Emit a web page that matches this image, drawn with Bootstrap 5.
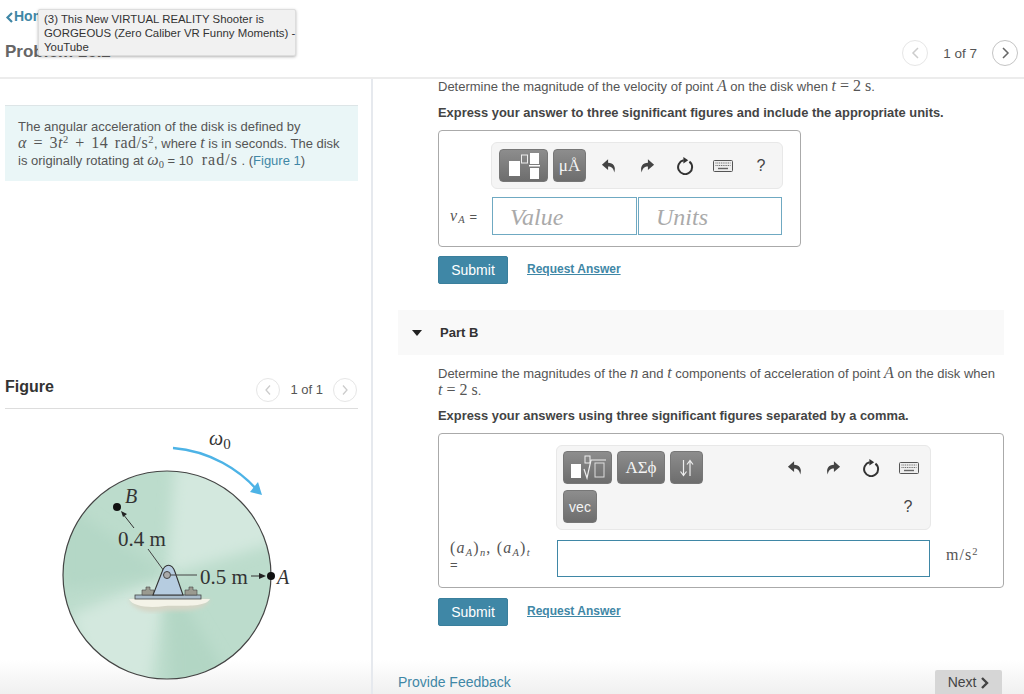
<!DOCTYPE html>
<html lang="en">
<head>
  <meta charset="UTF-8">
  <title>Problem 16.2</title>
  <link href="https://cdn.jsdelivr.net/npm/bootstrap@5.3.0/dist/css/bootstrap.min.css" rel="stylesheet">
  <style>
    html, body { height: 694px; overflow: hidden; }
    body {
      font: 13px/16px "Liberation Sans", Arial, sans-serif;
      color: #555;
      background: linear-gradient(to bottom, #fff 660px, #f0f0f0 694px);
    }
    a { color: #3f87a6; text-decoration: none; }
    .mj { font-family: "Liberation Serif", serif; font-size: 16px; line-height: 1; }
    .mj i { font-style: italic; }
    .mj sup, .mj sub { font-size: 10.5px; line-height: 0; }
    .mj-wide { word-spacing: 2px; letter-spacing: .5px; }
    .mj-rad { letter-spacing: 1px; }
    .mj-label { letter-spacing: 1.2px; }

    .top-bar { height: 79px; border-bottom: 2px solid #ececec; }
    .home-link { left: 5px; top: 8px; font-size: 14px; font-weight: 700; }
    .prob-title { left: 5px; top: 44px; font-size: 17px; font-weight: 700; color: #666; }
    .tab-tip {
      left: 38px; top: 9px; width: 258px; height: 47px; padding: 2px 5px;
      font-size: 11.4px; line-height: 14px; color: #333; background: #f1f1f1; white-space: nowrap;
      border: 1px solid #ddd; border-radius: 2px; box-shadow: 0 1px 3px rgba(0,0,0,.3);
    }
    .pager-top { padding: 40px 6px 0 0; color: #555; font-size: 13.5px; gap: 15px; }
    .pager-top .pg-count { margin-top: 6px; }
    .round-btn {
      width: 26px; height: 26px; border-radius: 50%; border: 1px solid #e6e6e6;
      display: flex; align-items: center; justify-content: center; background: #fff;
    }
    .round-btn.on { border-color: #c4c4c4; }

    .left-pane { width: 373px; height: 615px; border-right: 2px solid #e6e9ee; flex: none; padding: 26px 13px 0 5px; }
    .info-box { height: 76px; padding: 13px; background: #eaf6f7; border-top: 1px solid #dde5e7; }
    .figure-head { margin-top: 193px; height: 35px; border-bottom: 1px solid #ddd; padding-bottom: 3px; }
    .figure-name { font-size: 16px; font-weight: 700; color: #333; line-height: 18px; margin-top: -6px; }
    .pager-fig { gap: 10px; font-size: 13px; margin-right: 1px; }
    .pager-fig .round-btn { width: 24px; height: 24px; }
    .disk-art { display: block; margin: 11px 0 0 -5px; }

    .right-pane { flex: 1; padding: 0 20px 0 25px; }
    .part-body { padding-left: 40px; }
    .q-first { margin-top: -1px; }
    .strong-line { font-size: 12.9px; font-weight: 700; color: #444; margin-top: 10px; }
    .strong-b { margin-top: 9px; }

    .answer-box { border: 1px solid #aaa; border-radius: 4px; padding: 11px 18px 11px 11px; }
    .box-a { width: 363px; margin-top: 9px; height: 117px; }
    .box-b { width: 566px; margin-top: 9px; height: 155px; padding-right: 18px; }
    .tool-tray { background: #f5f5f5; border: 1px solid #e8e8e8; border-radius: 6px; }
    .tray-a { height: 47px; margin-left: 41px; width: 292px; padding: 6px 0 6px 7px; }
    .tray-b { width: 375px; height: 85px; margin-left: 106px; padding: 5px 6px; }
    .tool-btn {
      height: 33px; border-radius: 4px; border: 1px solid #777; color: #f4f4f4; flex: none;
      background: linear-gradient(to bottom, #8d8d8d, #6d6d6d);
      display: flex; align-items: center; justify-content: center; padding: 0;
      font: 17px/1 "Liberation Serif", serif;
    }
    .tool-btn + .tool-btn { margin-left: 5px; }
    .btn-tmpl { width: 49px; }
    .btn-unit { width: 33px; }
    .btn-greek { width: 48px; }
    .btn-vec { width: 34px; font: 14px "Liberation Sans", sans-serif; }
    .tool-set-a { margin-left: 4px; flex: none; }
    .tool-set-b { margin-left: 73px; flex: none; }
    .vec-row { margin-top: 6px; }
    .help-b { margin-right: -3px; }
    .tool-ic { width: 38px; flex: none; display: flex; align-items: center; justify-content: center; color: #444; font-size: 16px; }
    .math-label { width: 42px; flex: none; white-space: nowrap; }
    .math-label-b { width: 107px; }
    .ans-row-b { margin-top: 10px; }
    .ans-input { height: 38px; border: 1.5px solid #6fa9c2; background: #fff; font: italic 24px/38px "Liberation Serif", serif; color: #aaa; padding-left: 17px; }
    .ans-value { width: 145px; }
    .ans-units { width: 144px; }
    .ans-wide { width: 373px; height: 37px; border-color: #3f87a6; }
    .unit-tail { margin: 7px 0 0 16px; letter-spacing: 1px; }
    .submit-btn {
      width: 70px; height: 28px; background: #3f87a6; color: #fff; border: 1px solid #3a7f9c;
      border-radius: 2px; font-size: 14px; padding: 0; line-height: 26px;
    }
    .req-link { font-size: 12px; font-weight: 700; text-decoration: underline; margin: 0 0 2px 19px; }
    .submit-row { margin-top: 9px; }
    .submit-row-b { margin-top: 10px; }
    .part-bar { height: 45px; margin-top: 26px; background: #f9f9f9; color: #333; font-weight: 700; padding-left: 14px; }
    .caret-down { width: 0; height: 0; border: 5px solid transparent; border-top: 6px solid #222; border-bottom: 0; margin-right: 18px; }
    .part-q { margin-top: 10px; }
    .foot-row { margin-top: 44px; height: 24px; }
    .foot-row a { font-size: 14px; }
    .next-btn {
      width: 67px; height: 24px; margin-right: 2px; background: #d6d6d6; border: 0; border-radius: 2px 2px 0 0;
      color: #444; font-size: 14px; padding: 0;
    }
  </style>
</head>
<body class="position-relative">

  <svg width="0" height="0" class="position-absolute">
    <defs>
      <symbol id="ic-undo" viewBox="0 0 14 14"><path d="M6.2 1 L.8 5.8 L6.2 10.4 V7.4 C9 7.4 10.8 8.6 11.6 12.6 C13.4 7.8 10.8 4.2 6.2 4.2 Z" fill="#444"/></symbol>
      <symbol id="ic-redo" viewBox="0 0 14 14"><path d="M7.8 1 L13.2 5.8 L7.8 10.4 V7.4 C5 7.4 3.2 8.6 2.4 12.6 C.6 7.8 3.2 4.2 7.8 4.2 Z" fill="#444"/></symbol>
      <symbol id="ic-reset" viewBox="0 0 18 18"><path d="M13.4 4.6 A7 7 0 1 1 7.6 3.3" fill="none" stroke="#333" stroke-width="2"/><path d="M7.4 0 L12.2 3.2 L7.4 6.4 Z" fill="#333"/></symbol>
      <symbol id="ic-keys" viewBox="0 0 20 12">
        <rect x=".5" y=".5" width="19" height="11" rx="1" fill="#eee" stroke="#555"/>
        <path d="M2.5 3 H17.5 M2.5 5.5 H17.5" stroke="#666" stroke-width="1.2" stroke-dasharray="1 .8"/>
        <path d="M5 8.5 H15" stroke="#666" stroke-width="1.4"/>
      </symbol>
    </defs>
  </svg>

  <header class="top-bar position-relative d-flex justify-content-end">
    <a class="home-link position-absolute" href="#"><svg width="9" height="11" viewBox="0 0 9 11"><path d="M7 1 L2.500 5.500 L7 10" fill="none" stroke="#3f87a6" stroke-width="2.200"/></svg>Home</a>
    <div class="prob-title position-absolute">Problem 16.2</div>
    <div class="tab-tip position-absolute">(3) This New VIRTUAL REALITY Shooter is<br>GORGEOUS (Zero Caliber VR Funny Moments) -<br>YouTube</div>
    <div class="pager-top d-flex align-items-start">
      <span class="round-btn"><svg width="9" height="14" viewBox="0 0 9 14"><path d="M7 2 L2 7 L7 12" fill="none" stroke="#ccc" stroke-width="1.5"/></svg></span>
      <span class="pg-count">1 of 7</span>
      <span class="round-btn on"><svg width="9" height="14" viewBox="0 0 9 14"><path d="M2 2 L7 7 L2 12" fill="none" stroke="#666" stroke-width="1.5"/></svg></span>
    </div>
  </header>

  <main class="d-flex">
    <section class="left-pane">
      <div class="info-box">
        The angular acceleration of the disk is defined by<br>
        <span class="mj mj-wide"><i>α</i> = 3<i>t</i><sup>2</sup> + 14 rad/s<sup>2</sup></span>, where <span class="mj"><i>t</i></span> is in seconds. The disk<br>
        is originally rotating at <span class="mj"><i>ω</i><sub>0</sub></span> = 10 <span class="mj mj-rad">&nbsp;rad/s</span> . (<a href="#">Figure 1</a>)
      </div>
      <div class="figure-head d-flex justify-content-between align-items-center">
        <div class="figure-name">Figure</div>
        <div class="pager-fig d-flex align-items-center">
          <span class="round-btn"><svg width="8" height="12" viewBox="0 0 8 12"><path d="M6 1.5 L2 6 L6 10.5" fill="none" stroke="#ccc" stroke-width="1.3"/></svg></span>
          <span>1 of 1</span>
          <span class="round-btn"><svg width="8" height="12" viewBox="0 0 8 12"><path d="M2 1.5 L6 6 L2 10.5" fill="none" stroke="#ccc" stroke-width="1.3"/></svg></span>
        </div>
      </div>
      <svg class="disk-art" width="372" height="274" viewBox="0 420 372 274">
        <defs>
          <clipPath id="diskClip"><circle cx="167" cy="575" r="104"/></clipPath>
          <filter id="soft" x="-30%" y="-30%" width="160%" height="160%"><feGaussianBlur stdDeviation="7"/></filter>
          <filter id="softer"><feGaussianBlur stdDeviation="2"/></filter>
        </defs>
        <circle cx="167" cy="575" r="104" fill="#bcdccc"/>
        <g clip-path="url(#diskClip)">
          <polygon points="167,575 175,465 255,465 285,540" fill="#d3e8de" filter="url(#soft)"/>
          <polygon points="167,575 70,615 90,670 150,690" fill="#d3e8de" filter="url(#soft)"/>
          <polygon points="167,575 60,500 60,590" fill="#b4d7c6" filter="url(#soft)"/>
          <polygon points="167,575 170,690 230,680" fill="#b2d6c4" filter="url(#soft)"/>
        </g>
        <circle cx="167" cy="575" r="104" fill="none" stroke="#444" stroke-width="1.2"/>

        <path d="M173 448 C210 451 240 470 258 491" fill="none" stroke="#4db3e6" stroke-width="2.4"/>
        <path d="M262 495 L250 492 L258 482 Z" fill="#4db3e6"/>
        <text x="209" y="445" font-family="Liberation Serif" font-style="italic" font-size="20" fill="#333">ω<tspan font-size="15" font-style="normal" dy="4">0</tspan></text>

        <circle cx="117" cy="507" r="4" fill="#111"/>
        <text x="125" y="503" font-family="Liberation Serif" font-style="italic" font-size="20" fill="#333">B</text>
        <path d="M134 528 L123 514" stroke="#333" fill="none"/>
        <path d="M121 511 L127 514 L123 517 Z" fill="#222"/>
        <text x="118" y="546" font-family="Liberation Serif" font-size="21" fill="#333">0.4 m</text>
        <path d="M148 549 L164 571" stroke="#444" fill="none"/>

        <path d="M129 599 H210 C205 613 180 610 165 611 C150 613 133 612 129 599 Z" fill="#d5d5c6" filter="url(#softer)"/>
        <path d="M129 599 H210 C205 608 180 605 165 606 C150 608 133 607 129 599 Z" fill="#f4f3e8"/>
        <rect x="135" y="595" width="66" height="4" fill="#a9bccb" stroke="#444" stroke-width=".8"/>
        <path d="M142 595 V590 H146 V587 H150 V590 H154 V595 Z M185 595 V590 H189 V587 H193 V590 H197 V595 Z" fill="#9a9a90" stroke="#444" stroke-width=".6"/>
        <path d="M153 595 L162 572 C165 563 172 563 175 572 L183 595 Z" fill="#b6cce0" stroke="#333" stroke-width="1.1"/>
        <circle cx="167" cy="575" r="3.5" fill="#aaa" stroke="#444"/>
        <path d="M171 575 H197" stroke="#444" fill="none"/>
        <text x="200" y="584" font-family="Liberation Serif" font-size="21" fill="#333">0.5 m</text>
        <path d="M251 576 H261" stroke="#333" fill="none"/>
        <path d="M266 576 L259 573 V579 Z" fill="#222"/>
        <circle cx="271" cy="576" r="4" fill="#111"/>
        <text x="277" y="584" font-family="Liberation Serif" font-style="italic" font-size="20" fill="#333">A</text>
      </svg>
    </section>

    <section class="right-pane">
      <div class="part-body">
        <p class="q-first mb-0">Determine the magnitude of the velocity of point <span class="mj"><i>A</i></span> on the disk when <span class="mj"><i>t</i> = 2 s</span>.</p>
        <p class="strong-line mb-0">Express your answer to three significant figures and include the appropriate units.</p>

        <div class="answer-box box-a">
          <div class="tool-tray tray-a d-flex align-items-center">
            <button class="tool-btn btn-tmpl" aria-label="templates">
              <svg width="34" height="27" viewBox="0 0 34 27"><rect x="2" y="9" width="11" height="15" fill="#fff"/><rect x="14.500" y="3" width="6" height="8" fill="none" stroke="#eee"/><rect x="23" y="1" width="9" height="11" fill="#fff"/><rect x="22" y="13" width="11" height="1.500" fill="#fff"/><rect x="23" y="16" width="9" height="11" fill="#fff"/></svg>
            </button>
            <button class="tool-btn btn-unit">μÅ</button>
            <div class="d-flex align-items-center tool-set-a">
              <span class="tool-ic"><svg width="16" height="16"><use href="#ic-undo"/></svg></span>
              <span class="tool-ic"><svg width="16" height="16"><use href="#ic-redo"/></svg></span>
              <span class="tool-ic"><svg width="18" height="18"><use href="#ic-reset"/></svg></span>
              <span class="tool-ic"><svg width="20" height="12"><use href="#ic-keys"/></svg></span>
              <span class="tool-ic">?</span>
            </div>
          </div>
          <div class="d-flex align-items-center mt-2">
            <span class="math-label"><span class="mj mj-label"><i>v</i><sub><i>A</i></sub></span> =</span>
            <div class="ans-input ans-value">Value</div>
            <div class="ans-input ans-units ms-auto">Units</div>
          </div>
        </div>

        <div class="d-flex align-items-center submit-row">
          <button class="submit-btn">Submit</button>
          <a class="req-link" href="#">Request Answer</a>
        </div>
      </div>

      <div class="part-bar d-flex align-items-center">
        <span class="caret-down"></span>Part B
      </div>

      <div class="part-body">
        <p class="part-q mb-0">Determine the magnitudes of the <span class="mj"><i>n</i></span> and <span class="mj"><i>t</i></span> components of acceleration of point <span class="mj"><i>A</i></span> on the disk when<br><span class="mj"><i>t</i> = 2 s</span>.</p>
        <p class="strong-line strong-b mb-0">Express your answers using three significant figures separated by a comma.</p>

        <div class="answer-box box-b">
          <div class="tool-tray tray-b">
            <div class="d-flex">
              <button class="tool-btn btn-tmpl" aria-label="radical">
                <svg width="40" height="25" viewBox="0 0 40 25"><rect x="3" y="9" width="10" height="14" fill="#fff"/><rect x="17" y="1" width="5" height="7" fill="none" stroke="#eee"/><path d="M16 14 L19 23 L23 5 H38" fill="none" stroke="#eee" stroke-width="1.200"/><rect x="27" y="8" width="9" height="14" fill="none" stroke="#ddd"/></svg>
              </button>
              <button class="tool-btn btn-greek">ΑΣϕ</button>
              <button class="tool-btn btn-unit" aria-label="arrows">
                <svg width="16" height="18" viewBox="0 0 16 18"><path d="M4.500 1 V16 M1.500 12.500 L4.500 16.500 L7.500 12.500 M11 17 V2 M8 5.500 L11 1.500 L14 5.500" fill="none" stroke="#eee" stroke-width="1.200"/></svg>
              </button>
              <div class="d-flex align-items-center tool-set-b">
                <span class="tool-ic"><svg width="16" height="16"><use href="#ic-undo"/></svg></span>
                <span class="tool-ic"><svg width="16" height="16"><use href="#ic-redo"/></svg></span>
                <span class="tool-ic"><svg width="18" height="18"><use href="#ic-reset"/></svg></span>
                <span class="tool-ic"><svg width="20" height="12"><use href="#ic-keys"/></svg></span>
              </div>
            </div>
            <div class="d-flex vec-row justify-content-between align-items-center">
              <button class="tool-btn btn-vec">vec</button>
              <span class="tool-ic help-b">?</span>
            </div>
          </div>
          <div class="d-flex ans-row-b">
            <div class="math-label math-label-b"><span class="mj mj-label">(<i>a</i><sub><i>A</i></sub>)<sub><i>n</i></sub>, (<i>a</i><sub><i>A</i></sub>)<sub><i>t</i></sub></span><br>=</div>
            <div class="ans-input ans-wide"></div>
            <span class="mj unit-tail">m/s<sup>2</sup></span>
          </div>
        </div>

        <div class="d-flex align-items-center submit-row-b">
          <button class="submit-btn">Submit</button>
          <a class="req-link" href="#">Request Answer</a>
        </div>
      </div>

      <div class="foot-row d-flex justify-content-between align-items-center">
        <a href="#">Provide Feedback</a>
        <button class="next-btn">Next <svg width="9" height="12" viewBox="0 0 9 12"><path d="M2 1 L7 6 L2 11" fill="none" stroke="#444" stroke-width="2.400"/></svg></button>
      </div>
    </section>
  </main>

  <script src="https://cdn.jsdelivr.net/npm/bootstrap@5.3.0/dist/js/bootstrap.bundle.min.js"></script>
</body>
</html>
